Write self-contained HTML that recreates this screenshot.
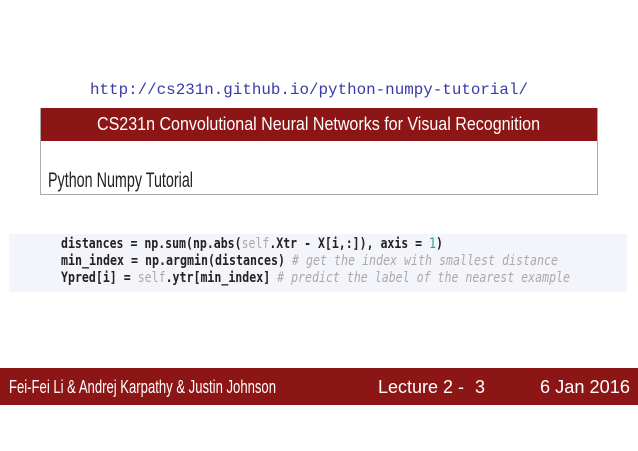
<!DOCTYPE html>
<html><head><style>html,body{margin:0;padding:0;background:#fff;}svg{display:block}</style></head>
<body>
<svg width="638" height="451" xmlns="http://www.w3.org/2000/svg">
<rect width="638" height="451" fill="#fff"/>
<text x="90" y="94" font-family="Liberation Mono, monospace" font-size="16" fill="#3a3aa8" textLength="438" lengthAdjust="spacingAndGlyphs">http://cs231n.github.io/python-numpy-tutorial/</text>
<rect x="40.5" y="108.5" width="557" height="86" fill="#fff" stroke="#aaa"/>
<rect x="41" y="108" width="556" height="33" fill="#8c1515"/>
<text x="97" y="130" font-family="Liberation Sans, sans-serif" font-size="18" fill="#fff" textLength="443" lengthAdjust="spacingAndGlyphs">CS231n Convolutional Neural Networks for Visual Recognition</text>
<text x="48" y="187" font-family="Liberation Sans, sans-serif" font-size="21" fill="#222" textLength="145" lengthAdjust="spacingAndGlyphs">Python Numpy Tutorial</text>
<rect x="9" y="234" width="618" height="58" fill="#f4f5fb"/>
<g font-family="DejaVu Sans Mono, monospace" font-size="14" font-weight="bold" fill="#222">
<text x="61" y="248" textLength="382" lengthAdjust="spacingAndGlyphs">distances = np.sum(np.abs(<tspan fill="#aaa" font-weight="normal">self</tspan>.Xtr - X[i,:]), axis = <tspan fill="#2a9d8f" font-weight="normal">1</tspan>)</text>
<text x="61" y="265" textLength="497" lengthAdjust="spacingAndGlyphs">min_index = np.argmin(distances) <tspan fill="#aaa" font-style="italic" font-weight="normal"># get the index with smallest distance</tspan></text>
<text x="61" y="282" textLength="509" lengthAdjust="spacingAndGlyphs">Ypred[i] = <tspan fill="#aaa" font-weight="normal">self</tspan>.ytr[min_index] <tspan fill="#aaa" font-style="italic" font-weight="normal"># predict the label of the nearest example</tspan></text>
</g>
<rect x="0" y="368" width="638" height="37" fill="#8c1515"/>
<g font-family="Liberation Sans, sans-serif" font-size="18" fill="#fff">
<text x="9" y="393" textLength="267" lengthAdjust="spacingAndGlyphs">Fei-Fei Li &amp; Andrej Karpathy &amp; Justin Johnson</text>
<text x="378" y="393" textLength="86" lengthAdjust="spacingAndGlyphs">Lecture 2 -</text>
<text x="475" y="393">3</text>
<text x="540" y="393" textLength="90" lengthAdjust="spacingAndGlyphs">6 Jan 2016</text>
</g>
</svg>
</body></html>
